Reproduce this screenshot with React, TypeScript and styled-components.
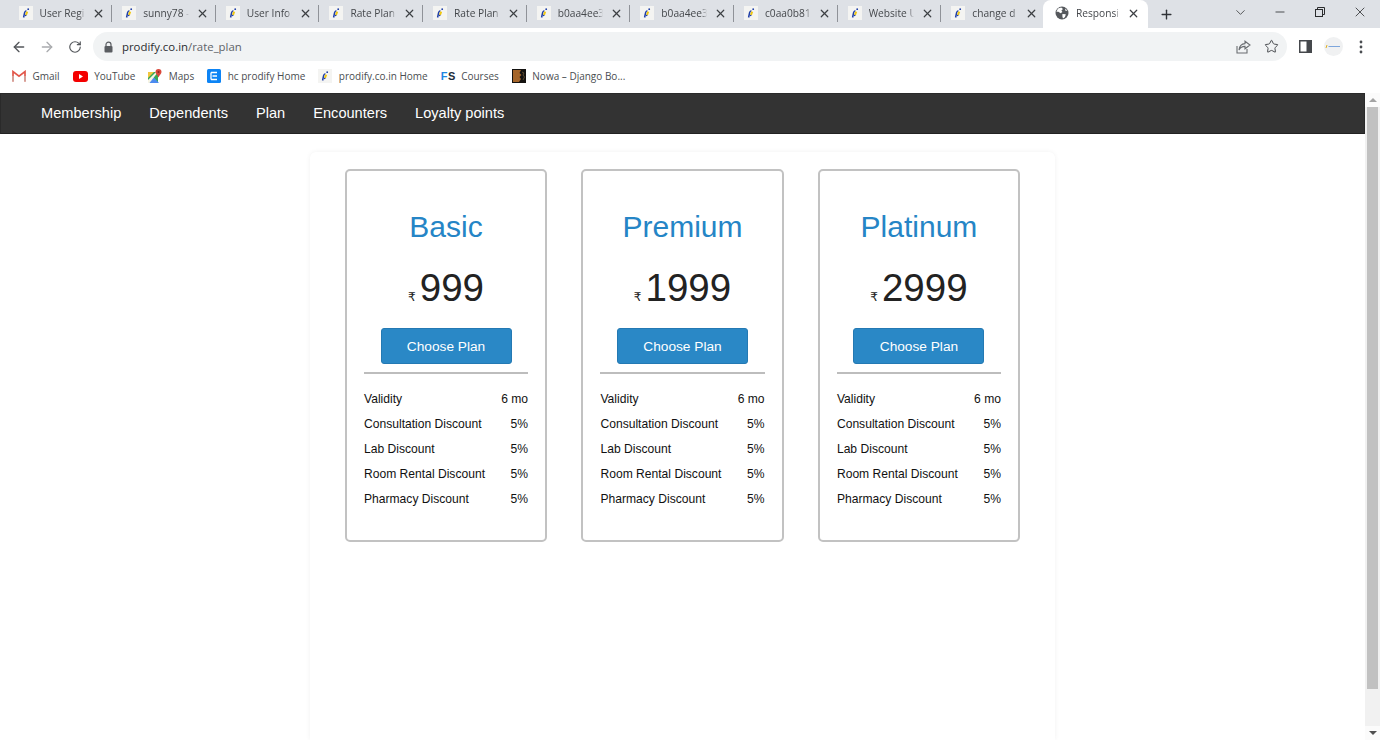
import React from "react";
import styled, { createGlobalStyle } from "styled-components";
import { ArrowLeft, ArrowRight, RotateCw, Star, Plus, X, ChevronDown, Minus } from "lucide-react";

const Global = createGlobalStyle`
  html, body { margin: 0; padding: 0; height: 100%; overflow: hidden; background: #fff; }
  * { box-sizing: border-box; }
  body { font-family: "Liberation Sans", Arial, sans-serif; }
`;

const Page = styled.div`
  width: 1380px; height: 740px; display: flex; flex-direction: column; overflow: hidden; background: #fff;
`;
const TabStrip = styled.div`
  height: 28px; flex: none; display: flex; align-items: stretch; background: #dee1e6; padding-left: 8.5px; position: relative;
`;
const Tab = styled.div<{ $active?: boolean; $sep?: boolean }>`
  width: ${p => (p.$active ? "105px" : "103.65px")};
  flex: none; display: flex; align-items: center; padding: ${p => (p.$active ? "0 8px 2px 12px" : "0 7px 2px 10px")}; gap: 7px; position: relative;
  background: ${p => (p.$active ? "#fff" : "transparent")};
  border-radius: ${p => (p.$active ? "8px 8px 0 0" : "0")};
  ${p => (p.$active ? "margin-left: -2px;" : "")}
  &::after {
    content: ""; display: ${p => (p.$sep ? "block" : "none")}; position: absolute; right: 0; top: 5px; bottom: 6px;
    width: 1px; background: #8f9298;
  }
`;
const TabTitle = styled.span`
  flex: 1; min-width: 0; white-space: nowrap;
  font: 10.2px "Open Sans", sans-serif; color: #45484c; line-height: 16px;
  -webkit-mask-image: linear-gradient(90deg, #000 88%, transparent 100%);
  mask-image: linear-gradient(90deg, #000 88%, transparent 100%);
`;
const NewTab = styled.div`
  width: 38px; flex: none; display: flex; align-items: center; justify-content: center; color: #2f3236;
`;
const WindowControls = styled.div`
  margin-left: auto; display: flex; align-items: center; height: 24px; color: #2b2c2e;
`;
const WinButton = styled.div`
  width: 40px; height: 24px; display: flex; align-items: center; justify-content: center;
`;
const Toolbar = styled.div`
  height: 37px; flex: none; background: #fff; display: flex; align-items: center; padding: 0 5px; color: #5f6368;
`;
const ToolButton = styled.div<{ $dim?: boolean; $w?: number }>`
  width: ${p => p.$w ?? 28}px; height: 28px; flex: none; display: flex; align-items: center; justify-content: center;
  color: ${p => (p.$dim ? "#a9abae" : "#53565a")};
`;
const Omnibox = styled.div`
  margin-left: 4px; width: 1194px; height: 29px; flex: none; background: #f1f3f4; border-radius: 15px;
  display: flex; align-items: center; padding: 0 2px 0 10px;
`;
const Url = styled.div`
  flex: 1; margin-left: 8px; font: 11.4px "Open Sans", sans-serif; color: #5f6368;
  b { font-weight: 400; color: #2a2c2f; }
`;
const Avatar = styled.div`
  width: 19px; height: 19px; border-radius: 50%; background: #f0f1f2; display: flex; align-items: center; justify-content: center;
`;
const Bookmarks = styled.div`
  height: 28px; flex: none; background: #fff; display: flex; align-items: center; padding: 0 0 6px 12px; gap: 13px;
`;
const Bookmark = styled.div`
  display: flex; align-items: center; gap: 6.5px; font: 10px "Open Sans", sans-serif; color: #4a4d51; white-space: nowrap;
`;
const FsMark = styled.span`
  width: 14px; font: 700 11px "Liberation Sans", sans-serif; color: #1c2b3a; letter-spacing: 0.5px;
  span { color: #1f86e0; }
`;
const Viewport = styled.div`
  flex: 1; min-height: 0; display: flex;
`;
const Main = styled.main`
  flex: 1; min-width: 0; display: flex; flex-direction: column; background: #fff;
`;
const NavBar = styled.nav`
  height: 41px; flex: none; background: #333; border: 1px solid #2a2a2a; border-bottom-color: #222;
  display: flex; align-items: center; padding: 0 0 1px 40px; gap: 28px;
`;
const NavLink = styled.a`
  color: #fff; font-size: 14.6px; line-height: 20px; text-decoration: none;
`;
const Panel = styled.section`
  margin: 18px auto 0; width: 745px; flex: 1; background: #fff; border-radius: 6px 6px 0 0;
  box-shadow: 0 0 5px rgba(0, 0, 0, 0.06); padding: 17px 35px 0;
  display: grid; grid-template-columns: repeat(3, 1fr); column-gap: 34.4px; align-items: start;
`;
const Card = styled.article`
  height: 373px; border: 2px solid #c2c2c2; border-radius: 5px; padding: 39px 17px 0; background: #fff;
`;
const PlanName = styled.h2`
  margin: 0; font-size: 30px; font-weight: 400; line-height: 34px; color: #2585c6; text-align: center;
`;
const Price = styled.div`
  margin-top: 22px; height: 44px; display: flex; justify-content: center; align-items: baseline; gap: 4px;
  font-size: 38.5px; line-height: 44px; color: #222;
`;
const Rupee = styled.span`
  font: 12px "DejaVu Sans", sans-serif; color: #222;
`;
const Choose = styled.button`
  display: block; margin: 18px auto 0; width: 131px; height: 36px; background: #2a88c6; color: #fff;
  border: 1px solid #2479b3; border-radius: 3px; font: 13.7px "Liberation Sans", sans-serif; padding: 0;
`;
const Divider = styled.hr`
  margin: 8px 0 12px; border: 0; height: 2px; background: #bdbdbd;
`;
const Row = styled.div`
  height: 25px; display: flex; justify-content: space-between; align-items: center; font-size: 12.1px; color: #111;
`;
const Scrollbar = styled.div`
  width: 15px; flex: none; background: #f1f1f1; display: flex; flex-direction: column; align-items: center;
`;
const ScrollArrow = styled.div<{ $down?: boolean }>`
  height: 14px; flex: none; width: 15px; display: flex; align-items: center; justify-content: center;
  background: #fbfbfb;
  &::before {
    content: ""; width: 0; height: 0; border-left: 4px solid transparent; border-right: 4px solid transparent;
    ${p => (p.$down ? "border-top: 4px solid #505050;" : "border-bottom: 4px solid #a3a3a3;")}
  }
`;
const Thumb = styled.div`
  width: 11px; height: 582px; background: #c1c1c1;
`;
const ScrollSpacer = styled.div`
  flex: 1;
`;

const Favicon = ({ size = 14 }: { size?: number }) => (
  <svg width={size} height={size} viewBox="0 0 14 14" style={{ flex: "none" }}>
    <rect width="14" height="14" fill="#f4f4f2" />
    <path d="M4.6 11.5 L5.6 6.6 Q6 5 7.4 4.6" stroke="#1f3fa8" strokeWidth="1.5" fill="none" />
    <path d="M7 9 L8.2 5.6" stroke="#f2c80f" strokeWidth="2" fill="none" />
    <path d="M6 9.6 L7.4 9.2" stroke="#1f3fa8" strokeWidth="1.1" fill="none" />
    <circle cx="9.2" cy="3.2" r="0.9" fill="#1f3fa8" />
  </svg>
);
const Globe = () => (
  <svg width="14" height="14" viewBox="0 0 14 14" style={{ flex: "none" }}>
    <circle cx="7" cy="7" r="6.5" fill="#55585c" />
    <path d="M3 2.6 L6.2 1.6 L8 3 L6.4 4.6 L7.4 6 L5.6 7.2 L3.4 5.8 L1.4 5.8 Z" fill="#fff" />
    <path d="M7.4 8 L10.8 8.2 L10 11 L8 12.6 L7.4 10.4 Z M10 2.4 L12.4 4.6 L10.6 5 Z" fill="#fff" />
  </svg>
);
const Gmail = () => (
  <svg width="14" height="12" viewBox="0 0 14 12">
    <path d="M1 11.5 V1.6 L7 6.2 L13 1.6 V11.5" fill="none" stroke="#e2574a" strokeWidth="1.7" />
    <path d="M1 11.5 V6" stroke="#d0a9a2" strokeWidth="1.7" />
    <path d="M13 11.5 V6" stroke="#d0a9a2" strokeWidth="1.7" />
  </svg>
);
const YouTube = () => (
  <svg width="15" height="11" viewBox="0 0 15 11">
    <rect width="15" height="11" rx="3" fill="#f40000" />
    <path d="M6 3 L10 5.5 L6 8 Z" fill="#fff" />
  </svg>
);
const Maps = () => (
  <svg width="14" height="14" viewBox="0 0 14 14">
    <path d="M0 3 H10 V14 H0 Z" fill="#35a853" />
    <path d="M0 14 L5.5 8 L11 14 Z" fill="#4c8bf0" />
    <path d="M0 3 H6 L0 9 Z" fill="#f3c63f" />
    <path d="M0 11 L8 3 H10 L1.5 14 H0 Z" fill="#f6f4e4" />
    <path d="M10.5 0 A3 3 0 0 1 13.5 3 C13.5 5 11.5 6 10.5 8.5 C9.5 6 7.5 5 7.5 3 A3 3 0 0 1 10.5 0 Z" fill="#d9483b" />
    <circle cx="10.5" cy="3" r="1" fill="#8e2a22" />
  </svg>
);
const HcIcon = () => (
  <svg width="14" height="14" viewBox="0 0 14 14">
    <rect width="14" height="14" rx="1.5" fill="#0d84f5" />
    <path d="M4 3.5 H10 M5.5 7 H10 M4 10.5 H10 M4 3.5 V10.5" stroke="#fff" strokeWidth="1.3" fill="none" />
  </svg>
);
const NowaIcon = () => (
  <svg width="14" height="14" viewBox="0 0 14 14">
    <rect width="14" height="14" fill="#141210" />
    <path d="M1 1 H9 L7.5 4 L9.5 6 L7.5 8 L9 10 L7 13 H1 Z" fill="#a5652a" />
    <path d="M10 3 L12 4 L11 6 L12.5 8 L11 11" stroke="#6e5a3a" strokeWidth="0.8" fill="none" />
  </svg>
);
const LockIcon = () => (
  <svg width="11" height="12" viewBox="0 0 11 12" style={{ flex: "none" }}>
    <path d="M3 5 V3.6 A2.5 2.5 0 0 1 8 3.6 V5" fill="none" stroke="#5a5d61" strokeWidth="1.2" />
    <rect x="1.5" y="5" width="8" height="6.5" rx="1" fill="#5a5d61" />
  </svg>
);
const ShareIcon = () => (
  <svg width="15" height="14" viewBox="0 0 15 14" fill="none" stroke="#6a6d71" strokeWidth="1.1">
    <path d="M1 6 V13 H11 V9" />
    <path d="M9 1.2 L14 5 L9 8.8 V6.4 C6 6.4 4.2 7.6 3 10 C3.4 6.4 5.4 3.8 9 3.6 Z" />
  </svg>
);
const PanelIcon = () => (
  <svg width="13" height="13" viewBox="0 0 13 13">
    <rect x="0.75" y="0.75" width="11.5" height="11.5" fill="none" stroke="#45484c" strokeWidth="1.5" />
    <rect x="7.5" y="1" width="4.5" height="11" fill="#45484c" />
  </svg>
);
const DotsIcon = () => (
  <svg width="4" height="14" viewBox="0 0 4 14" fill="#4a4d51">
    <circle cx="2" cy="2" r="1.4" /><circle cx="2" cy="7" r="1.4" /><circle cx="2" cy="12" r="1.4" />
  </svg>
);
const RestoreIcon = () => (
  <svg width="10" height="10" viewBox="0 0 10 10" fill="none" stroke="#2b2c2e" strokeWidth="1">
    <rect x="0.5" y="2.5" width="7" height="7" />
    <path d="M2.5 2.5 V0.5 H9.5 V7.5 H7.5" />
  </svg>
);
const AvatarMark = () => (
  <svg width="16" height="5" viewBox="0 0 16 5">
    <path d="M1 4 L2 1" stroke="#e0b020" strokeWidth="1" />
    <path d="M3.5 2.5 H15" stroke="#7ea6dc" strokeWidth="1" />
  </svg>
);

const tabs = ["User Regis", "sunny78 -", "User Info", "Rate Plan", "Rate Plan", "b0aa4ee3", "b0aa4ee3", "c0aa0b81", "Website U", "change d"];
const navItems = ["Membership", "Dependents", "Plan", "Encounters", "Loyalty points"];
const plans = [
  { name: "Basic", price: "999" },
  { name: "Premium", price: "1999" },
  { name: "Platinum", price: "2999" },
];
const features = [
  ["Validity", "6 mo"],
  ["Consultation Discount", "5%"],
  ["Lab Discount", "5%"],
  ["Room Rental Discount", "5%"],
  ["Pharmacy Discount", "5%"],
];

export default function App() {
  return (
    <Page>
      <Global />
      <TabStrip>
        {tabs.map((t, i) => (
          <Tab key={i} $sep={i < tabs.length - 1}>
            <Favicon />
            <TabTitle>{t}</TabTitle>
            <X size={13} strokeWidth={2.2} color="#3c3f43" style={{ flex: "none" }} />
          </Tab>
        ))}
        <Tab $active>
          <Globe />
          <TabTitle>Responsi</TabTitle>
          <X size={13} strokeWidth={2.2} color="#3c3f43" style={{ flex: "none" }} />
        </Tab>
        <NewTab><Plus size={15} strokeWidth={2.2} /></NewTab>
        <WindowControls>
          <WinButton><ChevronDown size={15} strokeWidth={1.2} /></WinButton>
          <WinButton><Minus size={14} strokeWidth={1.4} /></WinButton>
          <WinButton><RestoreIcon /></WinButton>
          <WinButton><X size={16} strokeWidth={1.2} /></WinButton>
        </WindowControls>
      </TabStrip>
      <Toolbar>
        <ToolButton><ArrowLeft size={16} strokeWidth={2} /></ToolButton>
        <ToolButton $dim><ArrowRight size={16} strokeWidth={2} /></ToolButton>
        <ToolButton><RotateCw size={14} strokeWidth={2} /></ToolButton>
        <Omnibox>
          <LockIcon />
          <Url><b>prodify.co.in</b>/rate_plan</Url>
          <ToolButton><ShareIcon /></ToolButton>
          <ToolButton><Star size={15} strokeWidth={1.6} color="#4a4d51" /></ToolButton>
        </Omnibox>
        <ToolButton $w={36}><PanelIcon /></ToolButton>
        <ToolButton $w={20}><Avatar><AvatarMark /></Avatar></ToolButton>
        <ToolButton $w={36}><DotsIcon /></ToolButton>
      </Toolbar>
      <Bookmarks>
        <Bookmark><Gmail />Gmail</Bookmark>
        <Bookmark><YouTube />YouTube</Bookmark>
        <Bookmark><Maps />Maps</Bookmark>
        <Bookmark><HcIcon />hc prodify Home</Bookmark>
        <Bookmark><Favicon />prodify.co.in Home</Bookmark>
        <Bookmark><FsMark><span>F</span>S</FsMark>Courses</Bookmark>
        <Bookmark><NowaIcon />Nowa – Django Bo...</Bookmark>
      </Bookmarks>
      <Viewport>
        <Main>
          <NavBar>
            {navItems.map(n => <NavLink key={n} href="#">{n}</NavLink>)}
          </NavBar>
          <Panel>
            {plans.map(p => (
              <Card key={p.name}>
                <PlanName>{p.name}</PlanName>
                <Price><Rupee>₹</Rupee>{p.price}</Price>
                <Choose>Choose Plan</Choose>
                <Divider />
                {features.map(([k, v]) => (
                  <Row key={k}><span>{k}</span><span>{v}</span></Row>
                ))}
              </Card>
            ))}
          </Panel>
        </Main>
        <Scrollbar>
          <ScrollArrow />
          <Thumb />
          <ScrollSpacer />
          <ScrollArrow $down />
        </Scrollbar>
      </Viewport>
    </Page>
  );
}
